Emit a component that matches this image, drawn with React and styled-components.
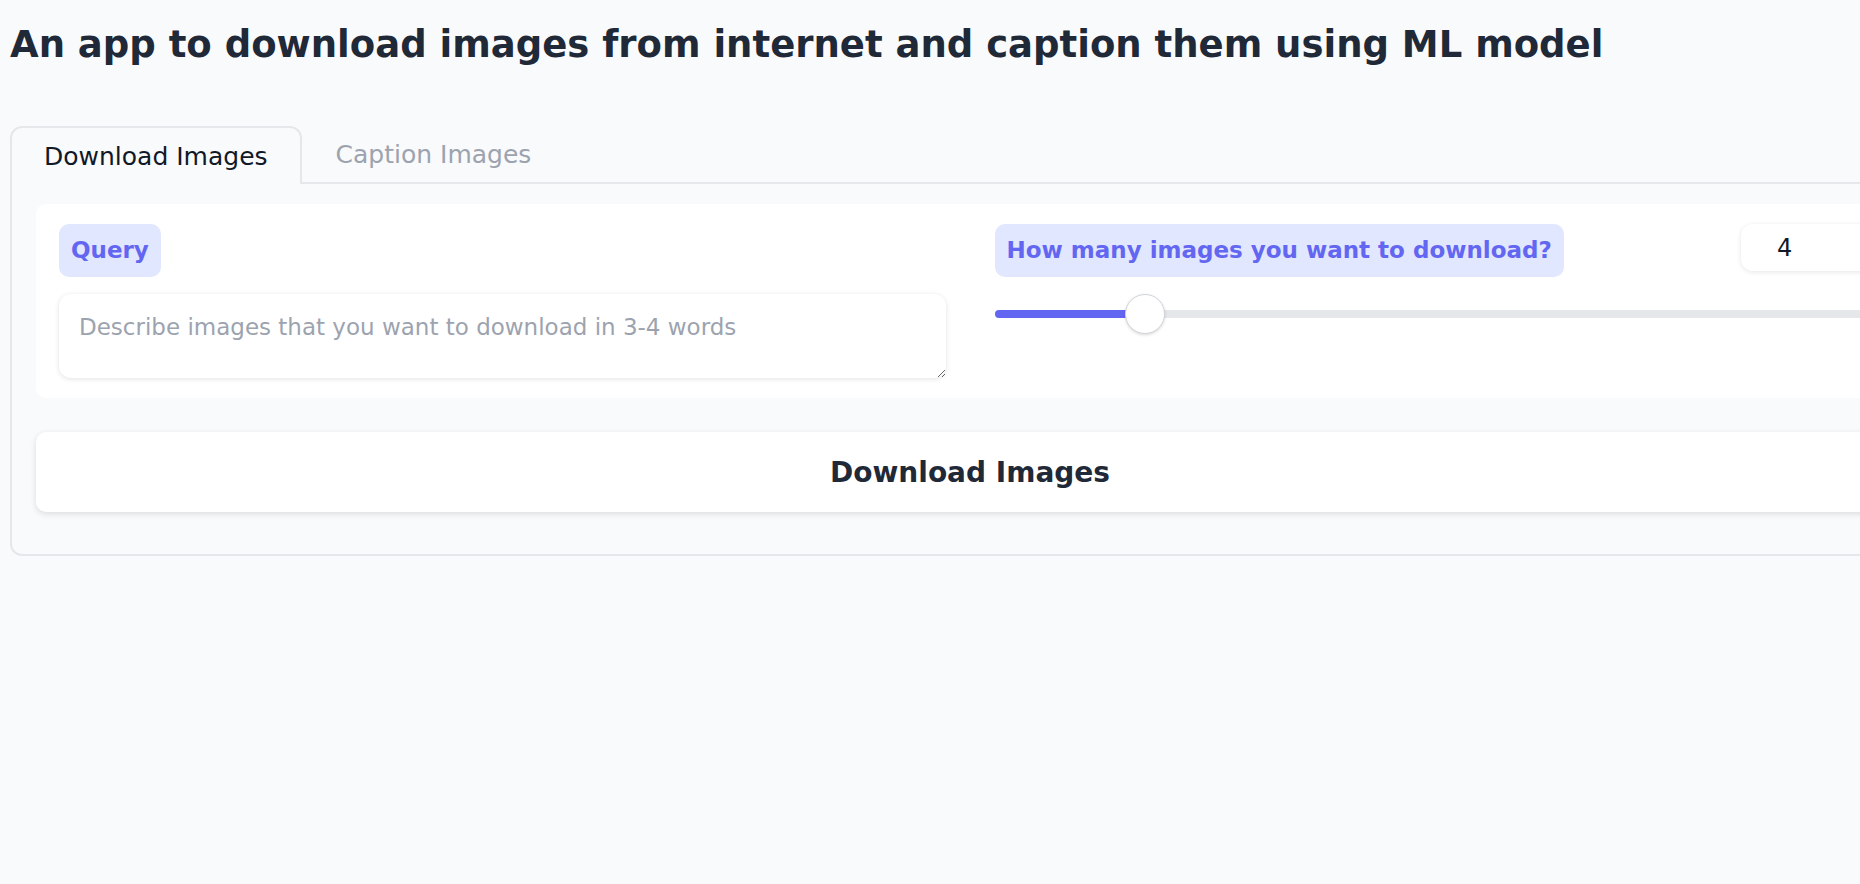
import React from "react";
import styled, { createGlobalStyle } from "styled-components";

const FONT = `"DejaVu Sans", Inter, sans-serif`;

const Global = createGlobalStyle`
  html, body { margin: 0; background: #f9fafb; overflow: hidden; }
  body { font-family: ${FONT}; color: #1f2937; }
`;

const Page = styled.div`
  width: 1940px;
  padding: 18px 10px 0;
  box-sizing: border-box;
`;

const Title = styled.h1`
  margin: 0 0 52px;
  font-size: 37px;
  font-weight: 700;
  line-height: 54px;
  color: #1f2937;
`;

const TabBar = styled.div`
  display: flex;
  align-items: flex-end;
  border-bottom: 2px solid #e5e7eb;
`;

const Tab = styled.div`
  height: 58px;
  padding: 0 32px;
  display: flex;
  align-items: center;
  font-size: 25px;
  box-sizing: border-box;
  color: ${(p) => (p.active ? "#111827" : "#9ca3af")};
  background: ${(p) => (p.active ? "#f9fafb" : "transparent")};
  border: ${(p) => (p.active ? "2px solid #e5e7eb" : "2px solid transparent")};
  border-bottom: none;
  border-radius: 12px 12px 0 0;
  margin-bottom: ${(p) => (p.active ? "-2px" : "0")};
`;

const Panel = styled.div`
  border: 2px solid #e5e7eb;
  border-top: none;
  border-radius: 0 0 12px 12px;
  padding: 20px 24px 42px;
  display: flex;
  flex-direction: column;
  gap: 34px;
`;

const Block = styled.div`
  background: #fff;
  border-radius: 10px;
  padding: 20px 23px 20px;
  display: grid;
  grid-template-columns: 1fr 1fr;
  gap: 49px;
`;

const Col = styled.div`
  display: flex;
  flex-direction: column;
  gap: 17px;
`;

const LabelRow = styled.div`
  display: flex;
  justify-content: space-between;
  align-items: flex-start;
`;

const Label = styled.span`
  align-self: flex-start;
  background: #e0e7ff;
  color: #6366f1;
  font-weight: 700;
  font-size: 23px;
  line-height: 53px;
  padding: 0 12px;
  border-radius: 10px;
`;

const TextArea = styled.textarea`
  height: 84px;
  box-sizing: border-box;
  border: none;
  border-radius: 12px;
  box-shadow: 0 1px 5px rgba(0, 0, 0, 0.12);
  padding: 20px 20px;
  font: 23px ${FONT};
  color: #111827;
  resize: vertical;
  &::placeholder { color: #9ca3af; }
`;

const NumberBox = styled.div`
  width: 140px;
  height: 47px;
  border-radius: 12px;
  box-shadow: 0 1px 5px rgba(0, 0, 0, 0.1);
  font-size: 24px;
  padding-left: 36px;
  box-sizing: border-box;
  display: flex;
  align-items: center;
  color: #111827;
`;

const Track = styled.div`
  position: relative;
  height: 8px;
  border-radius: 4px;
  background: #e5e7eb;
  margin-top: 16px;
`;

const Fill = styled.div`
  height: 100%;
  border-radius: 4px;
  background: #6366f1;
`;

const Thumb = styled.div`
  position: absolute;
  top: 50%;
  width: 38px;
  height: 38px;
  border-radius: 50%;
  background: #fff;
  border: 1px solid #d1d5db;
  box-shadow: 0 1px 3px rgba(0, 0, 0, 0.15);
  transform: translate(-50%, -50%);
`;

const Button = styled.button`
  height: 80px;
  border: none;
  border-radius: 10px;
  background: #fff;
  box-shadow: 0 2px 6px rgba(0, 0, 0, 0.12);
  font: 700 28px ${FONT};
  color: #1f2937;
`;

export default function App() {
  const pct = 17;
  return (
    <Page>
      <Global />
      <Title>An app to download images from internet and caption them using ML model</Title>
      <TabBar>
        <Tab active>Download Images</Tab>
        <Tab>Caption Images</Tab>
      </TabBar>
      <Panel>
        <Block>
          <Col>
            <Label>Query</Label>
            <TextArea placeholder="Describe images that you want to download in 3-4 words" />
          </Col>
          <Col>
            <LabelRow>
              <Label>How many images you want to download?</Label>
              <NumberBox>4</NumberBox>
            </LabelRow>
            <Track>
              <Fill style={{ width: `${pct}%` }} />
              <Thumb style={{ left: `${pct}%` }} />
            </Track>
          </Col>
        </Block>
        <Button>Download Images</Button>
      </Panel>
    </Page>
  );
}
